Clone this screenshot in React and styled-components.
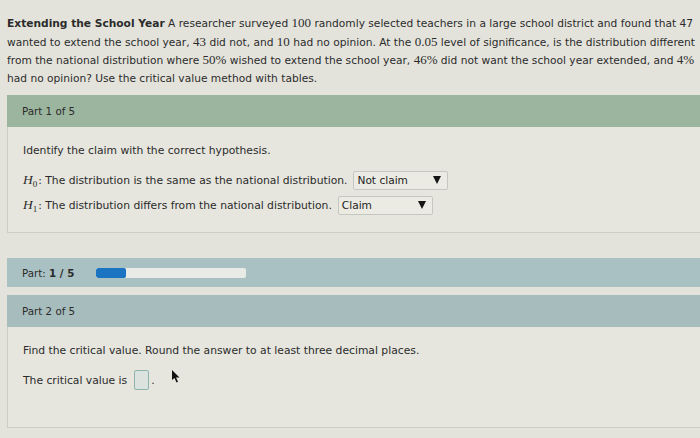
import React from 'react';
import styled, { createGlobalStyle } from 'styled-components';

const GlobalStyle = createGlobalStyle`
  html, body {
    margin: 0;
    padding: 0;
    background: #e3e3db;
    overflow: hidden;
  }
  body {
    font-family: "DejaVu Sans", Verdana, sans-serif;
    color: #2b2b2b;
  }
`;

const Page = styled.div`
  width: 760px;
  padding: 14px 0 0 7px;
  box-sizing: border-box;
`;

const Intro = styled.div`
  font-size: 10.65px;
  line-height: 17.5px;
  white-space: nowrap;
`;

const Line = styled.div``;

const Title = styled.b`
  font-weight: bold;
`;

const Num = styled.span`
  font-family: "Liberation Serif", "Times New Roman", serif;
  font-size: 13px;
`;

const PartHeader = styled.div`
  height: ${p => p.$h || 32}px;
  margin-top: ${p => p.$mt || 0}px;
  background: ${p => p.$bg};
  display: flex;
  align-items: center;
  gap: 22px;
  padding-left: 15px;
  font-size: 10.3px;
`;

const Panel = styled.div`
  border: 1px solid #cdcdc5;
  border-top: none;
  background: #e6e6de;
  height: ${p => p.$h}px;
  box-sizing: border-box;
  padding: 13px 15px 0;
  font-size: 10.75px;
`;

const Row = styled.div`
  display: flex;
  align-items: center;
  height: ${p => p.$h || 20}px;
  margin-top: ${p => p.$mt || 0}px;
  white-space: nowrap;
`;

const Hyp = styled.span`
  font-family: "Liberation Serif", "Times New Roman", serif;
  font-style: italic;
  font-size: 13.5px;
  margin-right: 1px;

  sub {
    font-style: normal;
    font-size: 9px;
    vertical-align: -3px;
  }
`;

const Select = styled.div`
  margin-left: 6px;
  width: 95px;
  height: 19px;
  box-sizing: border-box;
  border: 1px solid #c4c8c1;
  border-radius: 2px;
  background: #ebebe4;
  display: flex;
  align-items: center;
  justify-content: space-between;
  padding: 0 6px 0 3px;
  font-size: 10.6px;
  color: #222;
`;

const Arrow = styled.span`
  width: 0;
  height: 0;
  border-left: 4px solid transparent;
  border-right: 4px solid transparent;
  border-top: 8px solid #151515;
`;

const Bold = styled.b`
  font-weight: bold;
`;

const Track = styled.div`
  width: 150px;
  height: 10px;
  border-radius: 2px;
  background: #e8ebe6;
  overflow: hidden;
`;

const Fill = styled.div`
  height: 100%;
  background: #1a74c2;
  border-radius: 2px;
`;

const AnswerBox = styled.span`
  display: inline-block;
  width: 15px;
  height: 20px;
  box-sizing: border-box;
  margin-left: 7px;
  border: 1px solid #8db3ad;
  border-radius: 2px;
  background: #dce3de;
`;

const Dot = styled.span`
  margin-left: 2px;
`;

const Cursor = styled.svg`
  margin-left: 16px;
  margin-top: -8px;
`;

export default function App() {
  const part = 1;
  const total = 5;
  return (
    <Page>
      <GlobalStyle />
      <Intro>
        <Line>
          <Title>Extending the School Year</Title> A researcher surveyed <Num>100</Num> randomly selected teachers in a large school district and found that 47
        </Line>
        <Line>
          wanted to extend the school year, <Num>43</Num> did not, and <Num>10</Num> had no opinion. At the <Num>0.05</Num> level of significance, is the distribution different
        </Line>
        <Line>
          from the national distribution where <Num>50%</Num> wished to extend the school year, <Num>46%</Num> did not want the school year extended, and <Num>4%</Num>
        </Line>
        <Line>had no opinion? Use the critical value method with tables.</Line>
      </Intro>

      <PartHeader $bg="#9bb59f" $mt={8}>Part 1 of 5</PartHeader>
      <Panel $h={106}>
        <Row>Identify the claim with the correct hypothesis.</Row>
        <Row $mt={10}>
          <Hyp>H<sub>0</sub></Hyp>: The distribution is the same as the national distribution.
          <Select>Not claim<Arrow /></Select>
        </Row>
        <Row $mt={5}>
          <Hyp>H<sub>1</sub></Hyp>: The distribution differs from the national distribution.
          <Select>Claim<Arrow /></Select>
        </Row>
      </Panel>

      <PartHeader $bg="#aac1c3" $mt={25} $h={29}>
        <span>Part: <Bold>{part} / {total}</Bold></span>
        <Track>
          <Fill style={{ width: `${(part / total) * 100}%` }} />
        </Track>
      </PartHeader>

      <PartHeader $bg="#a7bdbd" $mt={8}>Part 2 of 5</PartHeader>
      <Panel $h={101}>
        <Row>Find the critical value. Round the answer to at least three decimal places.</Row>
        <Row $mt={9} $h={22}>
          The critical value is<AnswerBox /><Dot>.</Dot>
          <Cursor width="9" height="13" viewBox="0 0 9 13">
            <path d="M1 0 L1 10 L3.5 8 L5.5 12.5 L7 11.8 L5 7.5 L8.5 7.5 Z" fill="#111" />
          </Cursor>
        </Row>
      </Panel>
    </Page>
  );
}
